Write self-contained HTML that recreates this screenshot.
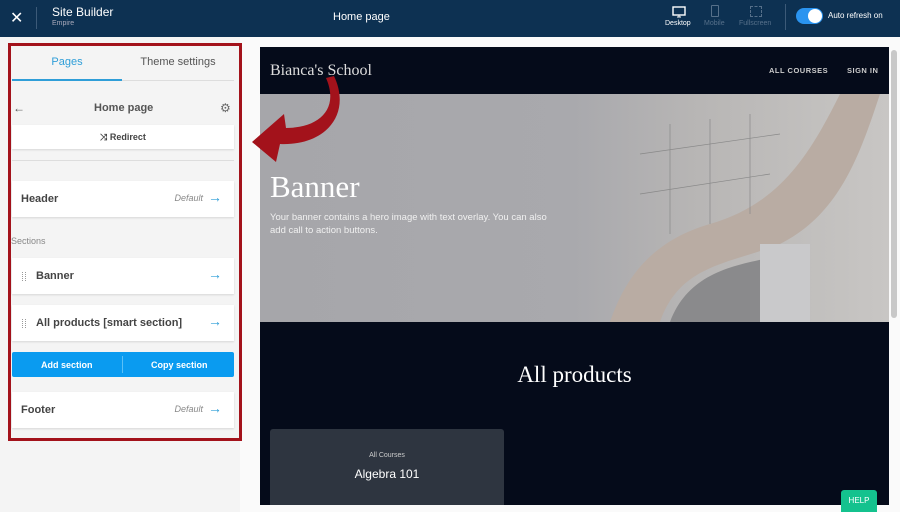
<!DOCTYPE html>
<html><head><style>
*{margin:0;padding:0;box-sizing:border-box}
body{width:900px;height:512px;overflow:hidden;background:#f4f4f4;font-family:"Liberation Sans",sans-serif;position:relative}
.top{position:absolute;left:0;top:0;width:900px;height:37px;background:#0d3152;color:#fff}
.abs{position:absolute}
.card{position:absolute;left:12px;width:222px;background:#fff;box-shadow:0 1px 2px rgba(0,0,0,.12);font-weight:bold;font-size:11px;color:#444}
.arr{position:absolute;right:12px;color:#2f9ed8;font-size:14px;font-weight:normal}
.def{position:absolute;right:31px;font-style:italic;font-weight:normal;font-size:9px;color:#888}
.grip{position:absolute;left:10px;width:4px;height:9px;border-left:1px dotted #999;border-right:1px dotted #999}
.serif{font-family:"Liberation Serif",serif}
</style></head><body>
<div class="top">
  <div class="abs" style="left:10px;top:8px;font-size:16px">✕</div>
  <div class="abs" style="left:36px;top:7px;width:1px;height:22px;background:#3c5a78"></div>
  <div class="abs" style="left:52px;top:5px;font-size:12px">Site Builder</div>
  <div class="abs" style="left:52px;top:20px;font-size:7px;color:#aab">Empire</div>
  <div class="abs" style="left:333px;top:11px;font-size:11px">Home page</div>
  <svg class="abs" style="left:672px;top:6px" width="14" height="12"><rect x="1" y="1" width="12" height="8" fill="none" stroke="#fff" stroke-width="1.4"/><path d="M5 11h4M7 9v2" stroke="#fff"/></svg>
  <div class="abs" style="left:665px;top:20px;font-size:7px">Desktop</div>
  <div class="abs" style="left:711px;top:5px;width:8px;height:12px;border:1px solid #56708a;border-radius:1px"></div>
  <div class="abs" style="left:704px;top:20px;font-size:7px;color:#56708a">Mobile</div>
  <div class="abs" style="left:750px;top:6px;width:12px;height:11px;border:1px dashed #56708a"></div>
  <div class="abs" style="left:739px;top:20px;font-size:7px;color:#56708a">Fullscreen</div>
  <div class="abs" style="left:785px;top:4px;width:1px;height:26px;background:#3c5a78"></div>
  <div class="abs" style="left:796px;top:8px;width:27px;height:16px;border-radius:8px;background:#2a94f0"></div>
  <div class="abs" style="left:808px;top:9px;width:14px;height:14px;border-radius:7px;background:#fff"></div>
  <div class="abs" style="left:828px;top:11px;font-size:8px">Auto refresh on</div>
</div>
<div class="abs" style="left:240px;top:37px;width:660px;height:475px;background:#fafafa"></div>
<div class="abs" style="left:8px;top:43px;width:234px;height:398px;border:3px solid #a3121b"></div>
<div class="abs" style="left:12px;top:56px;width:110px;text-align:center;font-size:11px;color:#2f9ed8">Pages</div>
<div class="abs" style="left:122px;top:56px;width:112px;text-align:center;font-size:11px;color:#555">Theme settings</div>
<div class="abs" style="left:12px;top:80px;width:222px;height:1px;background:#ddd"></div>
<div class="abs" style="left:12px;top:79px;width:110px;height:2px;background:#2f9ed8"></div>
<div class="abs" style="left:13px;top:101px;font-size:12px;color:#555">←</div>
<div class="abs" style="left:94px;top:102px;font-size:11px;font-weight:bold;color:#555">Home page</div>
<div class="abs" style="left:220px;top:101px;font-size:12px;color:#666">⚙</div>
<div class="card" style="top:125px;height:24px;text-align:center;line-height:24px;font-size:9px">⤨ Redirect</div>
<div class="abs" style="left:12px;top:160px;width:222px;height:1px;background:#ddd"></div>
<div class="card" style="top:181px;height:36px"><span class="abs" style="left:9px;top:12px">Header</span><span class="def" style="top:12px">Default</span><span class="arr" style="top:8px">→</span></div>
<div class="abs" style="left:11px;top:236px;font-size:9px;color:#888">Sections</div>
<div class="card" style="top:258px;height:36px"><span class="grip" style="top:14px"></span><span class="abs" style="left:24px;top:12px">Banner</span><span class="arr" style="top:8px">→</span></div>
<div class="card" style="top:305px;height:36px"><span class="grip" style="top:14px"></span><span class="abs" style="left:24px;top:12px">All products [smart section]</span><span class="arr" style="top:8px">→</span></div>
<div class="abs" style="left:12px;top:352px;width:222px;height:25px;background:#0a9bf0;border-radius:2px;color:#fff;font-size:9px;font-weight:bold">
  <span class="abs" style="left:29px;top:8px">Add section</span>
  <span class="abs" style="left:110px;top:4px;width:1px;height:17px;background:#5ac0f7"></span>
  <span class="abs" style="left:139px;top:8px">Copy section</span>
</div>
<div class="card" style="top:392px;height:36px"><span class="abs" style="left:9px;top:12px">Footer</span><span class="def" style="top:12px">Default</span><span class="arr" style="top:8px">→</span></div>
<div class="abs" style="left:260px;top:47px;width:629px;height:458px;background:#050b1a;overflow:hidden">
  <div class="abs serif" style="left:10px;top:15px;font-size:16px;color:#ddd">Bianca's School</div>
  <div class="abs" style="left:509px;top:19px;font-size:7.5px;font-weight:bold;color:#ccc;letter-spacing:.5px">ALL COURSES</div>
  <div class="abs" style="left:587px;top:19px;font-size:7.5px;font-weight:bold;color:#ccc;letter-spacing:.5px">SIGN IN</div>
  <div class="abs" style="left:0;top:47px;width:629px;height:228px;background:linear-gradient(90deg,#a6a6aa 0%,#a9a9ad 50%,#b8b6b5 70%,#c8c6c4 100%);overflow:hidden">
    <svg class="abs" style="left:320px;top:0" width="309" height="228">
      <path d="M260 0 C230 60 200 110 130 130 C60 150 40 200 30 228 L80 228 C100 170 150 170 200 150 C260 120 280 60 300 0Z" fill="#b9aca3"/>
      <path d="M90 228 C110 175 160 170 210 160 L210 228Z" fill="#8a8a8c"/>
      <path d="M180 150 L230 150 L230 228 L180 228Z" fill="#c9c9cb"/>
      <path d="M60 60 L200 40 M60 100 L190 80 M90 30 L90 140 M130 25 L130 130 M170 20 L170 120" stroke="#888" stroke-width=".7" fill="none"/>
    </svg>
    <div class="abs serif" style="left:10px;top:75px;font-size:31px;color:#fff">Banner</div>
    <div class="abs" style="left:10px;top:117px;width:290px;font-size:9.5px;line-height:13px;color:#f0f0f0">Your banner contains a hero image with text overlay. You can also add call to action buttons.</div>
  </div>
  <div class="abs serif" style="left:0;top:315px;width:629px;text-align:center;font-size:23px;color:#fff">All products</div>
  <div class="abs" style="left:10px;top:382px;width:234px;height:90px;background:#2e3540;border-radius:3px">
    <div class="abs" style="left:0;top:23px;width:234px;text-align:center;font-size:7px;color:#ccc">All Courses</div>
    <div class="abs" style="left:0;top:38px;width:234px;text-align:center;font-size:12px;color:#fff">Algebra 101</div>
  </div>
</div>
<div class="abs" style="left:891px;top:50px;width:6px;height:268px;background:#c8c8c8;border-radius:3px"></div>
<div class="abs" style="left:841px;top:490px;width:36px;height:22px;background:#14c28e;border-radius:3px 3px 0 0;color:#fff;font-size:8px;text-align:center;line-height:22px">HELP</div>
<svg class="abs" style="left:248px;top:70px" width="100" height="95">
  <path d="M78 8 C92 40 70 58 38 58 L36 44 L4 72 L28 92 L32 74 C78 76 104 44 86 6Z" fill="#a3121b"/>
</svg>
</body></html>
